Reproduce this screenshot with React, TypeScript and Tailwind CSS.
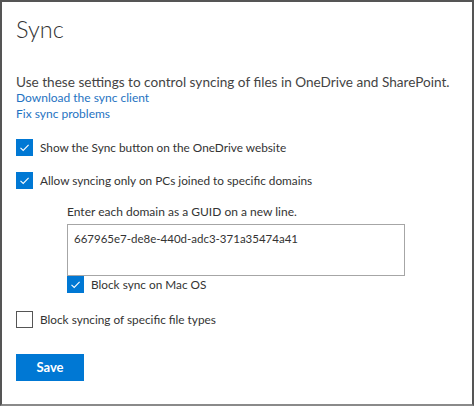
function Check() {
  return (
    <svg viewBox="0 0 17 17" className="h-[17px] w-[17px]" fill="none">
      <path d="M4.5 8.8 L7.2 11.4 L12.6 5.8" stroke="white" strokeWidth="1.1" />
    </svg>
  );
}

function Checkbox({ checked, label }: { checked: boolean; label: string }) {
  return (
    <div className="flex h-[17px] items-center gap-[7px]">
      {checked ? (
        <div className="h-[17px] w-[17px] bg-[#0078d4]">
          <Check />
        </div>
      ) : (
        <div className="h-[17px] w-[17px] border border-[#555]" />
      )}
      <span className="text-[11.8px] leading-[17px] text-[#333]">{label}</span>
    </div>
  );
}

export default function App() {
  return (
    <div
      className="h-[406px] w-[474px] border-2 border-b-[#8a8a8a] border-[#555] bg-white px-[14px]"
      style={{ fontFamily: 'Lato, "Noto Sans", sans-serif' }}
    >
      <h1 className="mt-[9px] text-[23.5px] font-light leading-[36px] text-[#333]">Sync</h1>

      <p className="mt-[27px] text-[13.6px] leading-[16px] text-[#444]">
        Use these settings to control syncing of files in OneDrive and SharePoint.
      </p>
      <div className="flex flex-col text-[12px] leading-[16px] text-[#1f73c2]">
        <span>Download the sync client</span>
        <span>Fix sync problems</span>
      </div>

      <div className="mt-[17px] flex flex-col gap-[16px]">
        <Checkbox checked label="Show the Sync button on the OneDrive website" />
        <Checkbox checked label="Allow syncing only on PCs joined to specific domains" />
      </div>

      <div className="ml-[51px] mt-[14px]">
        <p className="text-[12px] leading-[18px] text-[#333]">
          Enter each domain as a GUID on a new line.
        </p>
        <div className="mt-[3px] h-[52px] w-[338px] border border-[#a6a6a6] px-[6px] pt-[5px] text-[11.5px] leading-[18px] text-[#333]">
          667965e7-de8e-440d-adc3-371a35474a41
        </div>
        <Checkbox checked label="Block sync on Mac OS" />
      </div>

      <div className="mt-[18px]">
        <Checkbox checked={false} label="Block syncing of specific file types" />
      </div>

      <button className="mt-[26px] h-[27px] w-[68px] bg-[#0078d4] text-[13px] font-bold text-white">
        Save
      </button>
    </div>
  );
}
